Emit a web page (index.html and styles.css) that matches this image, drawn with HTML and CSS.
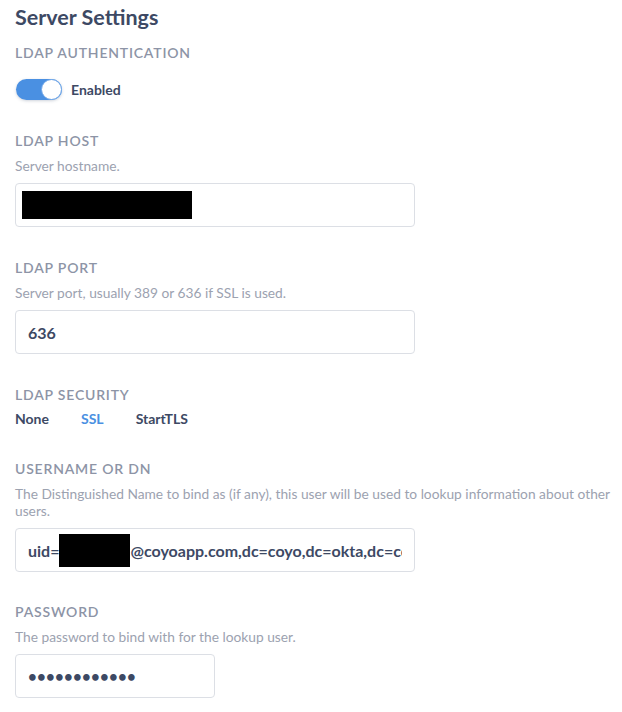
FILE: index.html
```html
<!DOCTYPE html>
<html lang="en">
<head>
<meta charset="utf-8">
<title>Server Settings</title>
<link rel="stylesheet" href="styles.css">
</head>
<body>
<div class="page">
  <h1 class="title">Server Settings</h1>

  <section class="field field-first">
    <div class="label">LDAP Authentication</div>
    <div class="toggle-row">
      <span class="toggle"><span class="knob"></span></span>
      <span class="toggle-text">Enabled</span>
    </div>
  </section>

  <section class="field">
    <div class="label">LDAP Host</div>
    <div class="desc">Server hostname.</div>
    <div class="input input-wide">
      <span class="redact redact-host"></span>
    </div>
  </section>

  <section class="field">
    <div class="label">LDAP Port</div>
    <div class="desc">Server port, usually 389 or 636 if SSL is used.</div>
    <div class="input input-wide"><span class="value">636</span></div>
  </section>

  <section class="field">
    <div class="label label-options">LDAP Security</div>
    <div class="options">
      <span class="option">None</span>
      <span class="option option-active">SSL</span>
      <span class="option">StartTLS</span>
    </div>
  </section>

  <section class="field field-tight">
    <div class="label">Username or DN</div>
    <div class="desc">The Distinguished Name to bind as (if any), this user will be used to lookup information about other users.</div>
    <div class="input input-wide">
      <div class="clip"><span class="value">uid=</span><span class="redact redact-uid"></span><span class="value">@coyoapp.com,dc=coyo,dc=okta,dc=com</span></div>
    </div>
  </section>

  <section class="field field-tight">
    <div class="label">Password</div>
    <div class="desc">The password to bind with for the lookup user.</div>
    <div class="input input-narrow"><span class="dots">••••••••••••</span></div>
  </section>
</div>
</body>
</html>
```

FILE: styles.css
```css
html, body {
  margin: 0;
  padding: 0;
  background: #ffffff;
}

body {
  font-family: Lato, "Open Sans", "Liberation Sans", sans-serif;
  color: #3d4964;
}

.page {
  padding: 5px 4px 0 15px;
  display: flex;
  flex-direction: column;
}

.title {
  margin: 0;
  font-size: 21.5px;
  line-height: 24px;
  font-weight: 700;
  color: #3d4964;
}

.field {
  display: flex;
  flex-direction: column;
  align-items: flex-start;
  margin-top: 31px;
}

.field-first {
  margin-top: 14px;
}

.field-tight {
  margin-top: 30px;
}

.label {
  font-size: 14px;
  line-height: 20px;
  font-weight: 600;
  letter-spacing: 0.8px;
  text-transform: uppercase;
  color: #8d94a6;
  margin-bottom: 6px;
}

.label-options {
  margin-bottom: 4px;
}

.desc {
  font-size: 13.75px;
  line-height: 17px;
  color: #9ca2b0;
  margin-bottom: 9px;
}

/* toggle */
.toggle-row {
  display: flex;
  align-items: center;
  margin-top: 10px;
}

.toggle {
  position: relative;
  width: 46px;
  height: 21px;
  margin-left: 1px;
  border-radius: 11px;
  background: #4a90e2;
  box-shadow: 0 1px 3px rgba(60, 80, 110, 0.25);
}

.knob {
  position: absolute;
  right: 0;
  top: 0;
  width: 21px;
  height: 21px;
  box-sizing: border-box;
  border-radius: 50%;
  background: #ffffff;
  border: 1px solid #6fa6e8;
}

.toggle-text {
  margin-left: 9px;
  font-size: 14px;
  line-height: 21px;
  font-weight: 700;
  color: #3d4964;
}

/* inputs */
.input {
  box-sizing: border-box;
  height: 44px;
  border: 1px solid #dcdfe5;
  border-radius: 4px;
  display: flex;
  align-items: center;
  padding: 0 12px 0 12px;
  background: #fff;
}

.input-wide {
  width: 400px;
}

.input-narrow {
  width: 200px;
}

.value {
  font-size: 16px;
  font-weight: 700;
  color: #3d4964;
  white-space: nowrap;
}

.clip {
  display: flex;
  align-items: center;
  overflow: hidden;
  width: 100%;
  white-space: nowrap;
}

.redact {
  display: inline-block;
  background: #000;
  flex: none;
}

.redact-host {
  width: 170px;
  height: 28px;
  margin-left: -6px;
}

.redact-uid {
  width: 71px;
  height: 33px;
}

.dots {
  font-size: 15px;
  font-weight: 700;
  color: #3d4964;
  letter-spacing: 0.3px;
}

/* options */
.options {
  display: flex;
  gap: 32px;
}

.option {
  font-size: 14px;
  line-height: 20px;
  font-weight: 700;
  color: #3d4964;
}

.option-active {
  color: #4a90e2;
}
```
